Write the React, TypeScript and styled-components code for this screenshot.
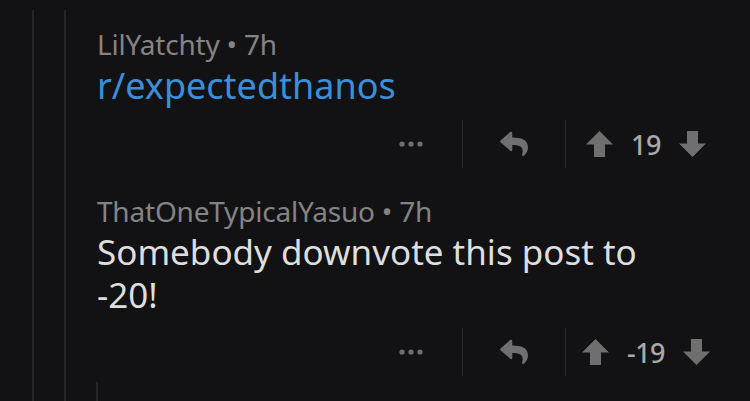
import styled, { createGlobalStyle } from "styled-components";
import { FaReply } from "react-icons/fa";

const GlobalStyle = createGlobalStyle`
  html, body {
    margin: 0;
    padding: 0;
    background: #121214;
    height: 401px;
    overflow: hidden;
  }
`;

const Page = styled.div`
  height: 401px;
  background: #121214;
  font-family: "Noto Sans", "Open Sans", sans-serif;
  padding-left: 32px;
  box-sizing: border-box;
`;

const Thread = styled.div<{ $top?: number; $indent?: number }>`
  border-left: 2px solid #252528;
  margin-top: ${(p) => p.$top ?? 0}px;
  margin-left: ${(p) => p.$indent ?? 0}px;
  height: ${(p) => (p.$top === undefined ? "100%" : "auto")};
  box-sizing: border-box;
`;

const Comment = styled.div`
  padding-left: 31px;
  display: flex;
  flex-direction: column;
`;

const Meta = styled.div<{ $top: number }>`
  font-size: 28px;
  line-height: 34px;
  color: #848484;
  padding-top: ${(p) => p.$top}px;
  letter-spacing: -0.2px;
`;

const LinkText = styled.a`
  font-size: 36px;
  line-height: 50px;
  color: #3b8fd9;
  text-decoration: none;
`;

const Body = styled.div`
  font-size: 35px;
  line-height: 43px;
  margin-top: 2px;
  color: #dedede;
`;

const ActionBar = styled.div<{ $top: number }>`
  display: flex;
  justify-content: flex-end;
  align-items: stretch;
  height: 48px;
  margin-top: ${(p) => p.$top}px;
  padding-right: 24px;
`;

const Cell = styled.div<{ $w: number }>`
  width: ${(p) => p.$w}px;
  display: flex;
  align-items: center;
  justify-content: center;
  gap: 18px;
`;

const Sep = styled.div`
  width: 1px;
  background: #2a2a2d;
`;

const Score = styled.span`
  font-size: 27px;
  font-weight: 500;
  color: #a9a9a9;
  letter-spacing: -0.5px;
`;

const Stub = styled.div`
  border-left: 2px solid #252528;
  margin-left: -1px;
  margin-top: 6px;
  height: 30px;
`;

const ICON = "#6f6f70";

const Dots = () => (
  <svg width="24" height="6" viewBox="0 0 24 6">
    <circle cx="3" cy="3" r="2.6" fill={ICON} />
    <circle cx="12" cy="3" r="2.6" fill={ICON} />
    <circle cx="21" cy="3" r="2.6" fill={ICON} />
  </svg>
);

const Arrow = ({ down }: { down?: boolean }) => (
  <svg
    width="27"
    height="26"
    viewBox="0 0 27 26"
    style={{ transform: down ? "rotate(180deg)" : undefined }}
  >
    <polygon points="13.5,0 27,13.5 19,13.5 19,26 8,26 8,13.5 0,13.5" fill={ICON} />
  </svg>
);

const Actions = ({ score, top }: { score: string; top: number }) => (
  <ActionBar $top={top}>
    <Cell $w={103}>
      <Dots />
    </Cell>
    <Sep />
    <Cell $w={102}>
      <FaReply size={28} color={ICON} />
    </Cell>
    <Sep />
    <Cell $w={160}>
      <Arrow />
      <Score>{score}</Score>
      <Arrow down />
    </Cell>
  </ActionBar>
);

export default function App() {
  return (
    <>
      <GlobalStyle />
      <Page>
        <Thread>
          <Thread $top={10} $indent={30}>
            <Comment>
              <Meta $top={17}>LilYatchty • 7h</Meta>
              <LinkText>r/expectedthanos</LinkText>
              <Actions score="19" top={9} />
            </Comment>
            <Comment>
              <Meta $top={26}>ThatOneTypicalYasuo • 7h</Meta>
              <Body>
                Somebody downvote this post to
                <br />
                -20!
              </Body>
              <Actions score="-19" top={12} />
              <Stub />
            </Comment>
          </Thread>
        </Thread>
      </Page>
    </>
  );
}
